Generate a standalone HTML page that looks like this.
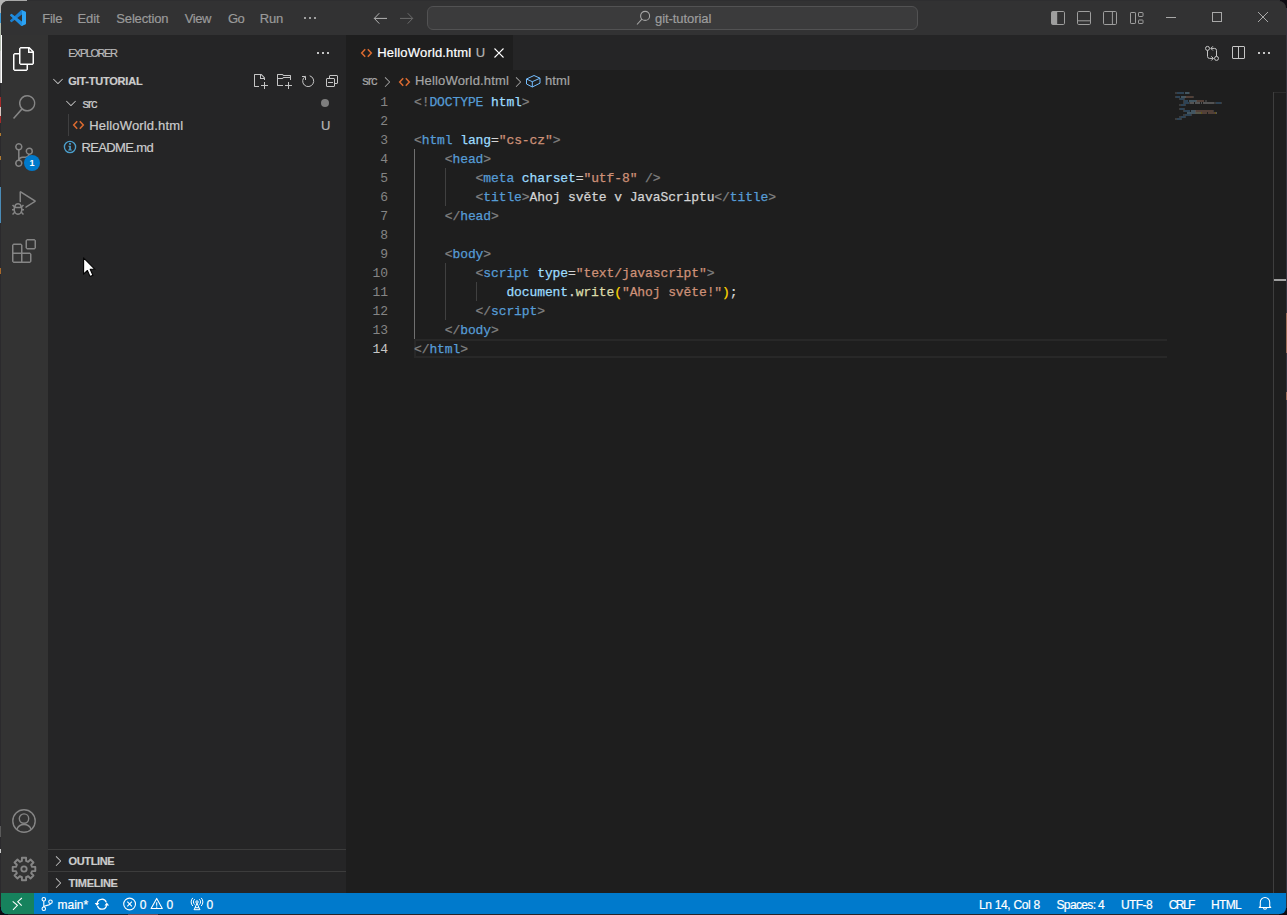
<!DOCTYPE html>
<html lang="en">
<head>
<meta charset="utf-8">
<title>HelloWorld.html - git-tutorial - Visual Studio Code</title>
<style>
*{box-sizing:border-box;margin:0;padding:0}
html,body{width:1287px;height:915px;overflow:hidden;background:#0e0b13;font-family:"Liberation Sans",sans-serif;}
#win{position:absolute;left:1px;top:1px;width:1285px;height:913px;background:#1e1e1e;border-radius:7px 7px 6px 6px;overflow:hidden;}
#abs{position:absolute;left:0;top:0;width:1287px;height:915px;}
.b{position:absolute;}
.t{position:absolute;white-space:pre;-webkit-text-stroke:0.2px;}
svg{position:absolute;overflow:visible}
#titlebar{left:0;top:0;width:1287px;height:35px;background:#323233;}
#cc{left:427px;top:6px;width:491px;height:24px;border-radius:6px;background:#3b3b3c;border:1px solid #525253;}
#act{left:0;top:35px;width:48px;height:858px;background:#333333;}
#side{left:48px;top:35px;width:298px;height:858px;background:#252526;}
#tabs{left:346px;top:35px;width:941px;height:35px;background:#252526;}
#tab{left:346px;top:35px;width:167px;height:35px;background:#1e1e1e;}
#status{left:0;top:893px;width:1287px;height:22px;background:#007acc;}
#remote{left:0;top:893px;width:34px;height:22px;background:#16825d;}
.hl{background:#3c3c3c;height:1px;}
.code{-webkit-text-stroke:0.25px;position:absolute;left:414px;font-family:"Liberation Mono",monospace;font-size:13px;line-height:19px;height:19px;letter-spacing:-0.101px;white-space:pre;color:#d4d4d4;}
.ln{position:absolute;left:346px;width:42px;text-align:right;font-family:"Liberation Mono",monospace;font-size:13px;line-height:19px;height:19px;letter-spacing:-0.101px;color:#858585;}
.g{color:#808080}.k{color:#569cd6}.a{color:#9cdcfe}.s{color:#ce9178}.f{color:#dcdcaa}.y{color:#ffd700}
#mm i{position:absolute;height:2px;opacity:.3}
.ig{position:absolute;width:1px;background:#404040;}
</style>
</head>
<body>
<div id="desk">
<div class="b" style="left:0;top:0;width:27px;height:1px;background:#a8a8a8"></div>
<div class="b" style="left:27px;top:0;width:1253px;height:1px;background:#2e2e30"></div>
<div class="b" style="left:0;top:0;width:8px;height:8px;background:#b4b4b4"></div>
<div class="b" style="left:0;top:8px;width:1px;height:899px;background:#2b2a2d"></div>
<div class="b" style="left:0;top:0;width:1px;height:13px;background:#b4b4b4"></div>
<div class="b" style="left:0;top:13px;width:1px;height:10px;background:#3a96d2"></div>
<div class="b" style="left:0;top:23px;width:1px;height:28px;background:#b4bdb0"></div>
<div class="b" style="left:0;top:51px;width:1px;height:32px;background:#c8c8c8"></div>
<div class="b" style="left:0;top:97px;width:1px;height:26px;background:#a52a2a"></div>
<div class="b" style="left:0;top:107px;width:1px;height:9px;background:#d9c9c4"></div>
<div class="b" style="left:0;top:133px;width:1px;height:3px;background:#b07a30"></div>
<div class="b" style="left:0;top:156px;width:1px;height:4px;background:#b07a30"></div>
<div class="b" style="left:0;top:187px;width:1px;height:36px;background:#4a8cb8"></div>
<div class="b" style="left:0;top:268px;width:1px;height:6px;background:#a8682a"></div>
<div class="b" style="left:0;top:826px;width:1px;height:11px;background:#5a5a5a"></div>
<div class="b" style="left:0;top:849px;width:1px;height:4px;background:#c8c8c8"></div>
<div class="b" style="left:1286px;top:8px;width:1px;height:900px;background:#36333e"></div>
<div class="b" style="left:1286px;top:313px;width:1px;height:40px;background:#9a6a58"></div>
<div class="b" style="left:1286px;top:392px;width:1px;height:8px;background:#9a6a58"></div>
<div class="b" style="left:8px;top:914px;width:1271px;height:1px;background:#2a2428"></div>
<div class="b" style="left:128px;top:914px;width:30px;height:1px;background:#7a4a50"></div>
</div>
<div id="win">
<div id="abs" style="left:-1px;top:-1px">
<!-- backgrounds -->
<div class="b" id="titlebar"></div>
<div class="b" id="cc"></div>
<div class="b" id="act"></div>
<div class="b" id="side"></div>
<div class="b" id="tabs"></div>
<div class="b" id="tab"></div>
<div class="b" id="status"></div>
<div class="b" id="remote"></div>
<!-- activity bar active indicator -->
<div class="b" style="left:1px;top:35px;width:1px;height:48px;background:#ffffff"></div>
<!-- sidebar section borders -->
<div class="b hl" style="left:48px;top:849px;width:298px;"></div>
<div class="b hl" style="left:48px;top:871px;width:298px;"></div>
<!-- tree indent guide -->
<div class="b" style="left:68px;top:114px;width:1px;height:22px;background:#3f3f40"></div>
<!-- tree dot -->
<div class="b" style="left:321px;top:99px;width:8px;height:8px;border-radius:50%;background:#7e7e7e"></div>

<!-- editor: current line -->
<div class="b" style="left:414px;top:339px;width:753px;height:19px;border:2px solid #282828;border-right:0;"></div>
<!-- indent guides -->
<div class="ig" style="left:414px;top:149px;height:190px;background:#707070"></div>
<div class="ig" style="left:445px;top:168px;height:38px;"></div>
<div class="ig" style="left:445px;top:263px;height:57px;"></div>
<div class="ig" style="left:476px;top:282px;height:19px;"></div>
<!-- overview ruler -->
<div class="b" style="left:1273px;top:92px;width:14px;height:1px;background:#2d2d2d"></div>
<div class="b" style="left:1273px;top:92px;width:1px;height:801px;background:#3e3e3e"></div>
<div class="b" style="left:1274px;top:279px;width:13px;height:2px;background:#a0a0a0"></div>

<div class="ln" style="top:93px;color:#858585">1</div>
<div class="code" style="top:93px"><span class="g">&lt;!</span><span class="k">DOCTYPE</span> <span class="a">html</span><span class="g">&gt;</span></div>
<div class="ln" style="top:112px;color:#858585">2</div>
<div class="ln" style="top:131px;color:#858585">3</div>
<div class="code" style="top:131px"><span class="g">&lt;</span><span class="k">html</span> <span class="a">lang</span>=<span class="s">"cs-cz"</span><span class="g">&gt;</span></div>
<div class="ln" style="top:150px;color:#858585">4</div>
<div class="code" style="top:150px">    <span class="g">&lt;</span><span class="k">head</span><span class="g">&gt;</span></div>
<div class="ln" style="top:169px;color:#858585">5</div>
<div class="code" style="top:169px">        <span class="g">&lt;</span><span class="k">meta</span> <span class="a">charset</span>=<span class="s">"utf-8"</span> <span class="g">/&gt;</span></div>
<div class="ln" style="top:188px;color:#858585">6</div>
<div class="code" style="top:188px">        <span class="g">&lt;</span><span class="k">title</span><span class="g">&gt;</span>Ahoj světe v JavaScriptu<span class="g">&lt;/</span><span class="k">title</span><span class="g">&gt;</span></div>
<div class="ln" style="top:207px;color:#858585">7</div>
<div class="code" style="top:207px">    <span class="g">&lt;/</span><span class="k">head</span><span class="g">&gt;</span></div>
<div class="ln" style="top:226px;color:#858585">8</div>
<div class="ln" style="top:245px;color:#858585">9</div>
<div class="code" style="top:245px">    <span class="g">&lt;</span><span class="k">body</span><span class="g">&gt;</span></div>
<div class="ln" style="top:264px;color:#858585">10</div>
<div class="code" style="top:264px">        <span class="g">&lt;</span><span class="k">script</span> <span class="a">type</span>=<span class="s">"text/javascript"</span><span class="g">&gt;</span></div>
<div class="ln" style="top:283px;color:#858585">11</div>
<div class="code" style="top:283px">            <span class="a">document</span>.<span class="f">write</span><span class="y">(</span><span class="s">"Ahoj světe!"</span><span class="y">)</span>;</div>
<div class="ln" style="top:302px;color:#858585">12</div>
<div class="code" style="top:302px">        <span class="g">&lt;/</span><span class="k">script</span><span class="g">&gt;</span></div>
<div class="ln" style="top:321px;color:#858585">13</div>
<div class="code" style="top:321px">    <span class="g">&lt;/</span><span class="k">body</span><span class="g">&gt;</span></div>
<div class="ln" style="top:340px;color:#c6c6c6">14</div>
<div class="code" style="top:340px"><span class="g">&lt;/</span><span class="k">html</span><span class="g">&gt;</span></div>
<div id="mm"><i style="left:1175px;top:92px;width:2px;background:#808080"></i><i style="left:1177px;top:92px;width:7px;background:#569cd6"></i><i style="left:1185px;top:92px;width:4px;background:#9cdcfe"></i><i style="left:1189px;top:92px;width:1px;background:#808080"></i><i style="left:1175px;top:96px;width:1px;background:#808080"></i><i style="left:1176px;top:96px;width:4px;background:#569cd6"></i><i style="left:1181px;top:96px;width:4px;background:#9cdcfe"></i><i style="left:1185px;top:96px;width:1px;background:#d4d4d4"></i><i style="left:1186px;top:96px;width:7px;background:#ce9178"></i><i style="left:1193px;top:96px;width:1px;background:#808080"></i><i style="left:1179px;top:98px;width:1px;background:#808080"></i><i style="left:1180px;top:98px;width:4px;background:#569cd6"></i><i style="left:1184px;top:98px;width:1px;background:#808080"></i><i style="left:1183px;top:100px;width:1px;background:#808080"></i><i style="left:1184px;top:100px;width:4px;background:#569cd6"></i><i style="left:1189px;top:100px;width:7px;background:#9cdcfe"></i><i style="left:1196px;top:100px;width:1px;background:#d4d4d4"></i><i style="left:1197px;top:100px;width:7px;background:#ce9178"></i><i style="left:1205px;top:100px;width:2px;background:#808080"></i><i style="left:1183px;top:102px;width:1px;background:#808080"></i><i style="left:1184px;top:102px;width:5px;background:#569cd6"></i><i style="left:1189px;top:102px;width:1px;background:#808080"></i><i style="left:1190px;top:102px;width:4px;background:#d4d4d4"></i><i style="left:1195px;top:102px;width:5px;background:#d4d4d4"></i><i style="left:1201px;top:102px;width:1px;background:#d4d4d4"></i><i style="left:1203px;top:102px;width:11px;background:#d4d4d4"></i><i style="left:1214px;top:102px;width:2px;background:#808080"></i><i style="left:1216px;top:102px;width:5px;background:#569cd6"></i><i style="left:1221px;top:102px;width:1px;background:#808080"></i><i style="left:1179px;top:104px;width:2px;background:#808080"></i><i style="left:1181px;top:104px;width:4px;background:#569cd6"></i><i style="left:1185px;top:104px;width:1px;background:#808080"></i><i style="left:1179px;top:108px;width:1px;background:#808080"></i><i style="left:1180px;top:108px;width:4px;background:#569cd6"></i><i style="left:1184px;top:108px;width:1px;background:#808080"></i><i style="left:1183px;top:110px;width:1px;background:#808080"></i><i style="left:1184px;top:110px;width:6px;background:#569cd6"></i><i style="left:1191px;top:110px;width:4px;background:#9cdcfe"></i><i style="left:1195px;top:110px;width:1px;background:#d4d4d4"></i><i style="left:1196px;top:110px;width:17px;background:#ce9178"></i><i style="left:1213px;top:110px;width:1px;background:#808080"></i><i style="left:1187px;top:112px;width:8px;background:#9cdcfe"></i><i style="left:1195px;top:112px;width:1px;background:#d4d4d4"></i><i style="left:1196px;top:112px;width:5px;background:#dcdcaa"></i><i style="left:1201px;top:112px;width:1px;background:#ffd700"></i><i style="left:1202px;top:112px;width:5px;background:#ce9178"></i><i style="left:1208px;top:112px;width:7px;background:#ce9178"></i><i style="left:1215px;top:112px;width:1px;background:#ffd700"></i><i style="left:1216px;top:112px;width:1px;background:#d4d4d4"></i><i style="left:1183px;top:114px;width:2px;background:#808080"></i><i style="left:1185px;top:114px;width:6px;background:#569cd6"></i><i style="left:1191px;top:114px;width:1px;background:#808080"></i><i style="left:1179px;top:116px;width:2px;background:#808080"></i><i style="left:1181px;top:116px;width:4px;background:#569cd6"></i><i style="left:1185px;top:116px;width:1px;background:#808080"></i><i style="left:1175px;top:118px;width:2px;background:#808080"></i><i style="left:1177px;top:118px;width:4px;background:#569cd6"></i><i style="left:1181px;top:118px;width:1px;background:#808080"></i></div>
<!-- VS Code logo -->
<svg style="left:10px;top:10px" width="16" height="16" viewBox="0 0 100 100">
<path fill="#1a7fd0" d="M96.5 10.8 75.9.9a6.2 6.2 0 0 0-7.1 1.2L1.3 63.6a4.2 4.2 0 0 0 0 6.2l5.5 5a4.2 4.2 0 0 0 5.3.2L93.3 13.4c2.7-2.1 6.7-.1 6.7 3.3v-.2a6.300 6.300 0 0 0-3.500-5.700z"/>
<path fill="#1f8ee2" d="M96.5 89.200 75.900 99.100a6.200 6.200 0 0 1-7.100-1.200L1.300 36.400a4.200 4.200 0 0 1 0-6.200l5.500-5a4.200 4.200 0 0 1 5.300-.2L93.300 86.600c2.700 2.100 6.700.1 6.700-3.300v.2a6.300 6.300 0 0 1-3.500 5.700z"/>
<path fill="#2ca3f4" d="M75.900 99.100a6.200 6.200 0 0 1-7.100-1.200c2.300 2.300 6.200.7 6.200-2.600V4.700c0-3.300-3.900-4.900-6.200-2.600A6.200 6.200 0 0 1 75.900.9l20.600 9.900a6.300 6.300 0 0 1 3.500 5.600v67.200a6.300 6.300 0 0 1-3.500 5.600L75.900 99.100z"/>
</svg>
<!-- activity: explorer (active) -->
<svg style="left:12px;top:47px" width="24" height="24" viewBox="0 0 24 24"><path fill="#ffffff" d="M17.500 0h-9L7 1.500V6H2.500L1 7.500v15.070L2.500 24h12.070L16 22.570V18h4.700l1.300-1.430V4.500L17.500 0zm0 2.120l2.380 2.380H17.500V2.120zm-3 20.380h-12v-15H7v9.070L8.500 18h6v4.500zm6-6h-12v-15H16V6h4.500v10.500z"/></svg>
<!-- search -->
<svg style="left:12px;top:95px" width="24" height="24" viewBox="0 0 24 24"><path fill="#858585" d="M15.250 0a8.250 8.250 0 0 0-6.180 13.720L1 22.880l1.120 1.120 8.050-9.120A8.251 8.251 0 1 0 15.250.010V0zm0 15a6.750 6.750 0 1 1 0-13.500 6.750 6.750 0 0 1 0 13.500z"/></svg>
<!-- source control -->
<svg style="left:12px;top:143px" width="24" height="24" viewBox="0 0 24 24"><path fill="#858585" d="M21.007 8.222A3.738 3.738 0 0 0 15.045 5.200a3.737 3.737 0 0 0 1.156 6.583 2.988 2.988 0 0 1-2.668 1.670h-2.990a4.456 4.456 0 0 0-2.989 1.165V7.400a3.737 3.737 0 1 0-1.494 0v9.117a3.776 3.776 0 1 0 1.816.099 2.990 2.990 0 0 1 2.668-1.667h2.990a4.484 4.484 0 0 0 4.223-3.039 3.736 3.736 0 0 0 3.250-3.687zM4.565 3.738a2.242 2.242 0 1 1 4.484 0 2.242 2.242 0 0 1-4.484 0zm4.484 16.441a2.242 2.242 0 1 1-4.484 0 2.242 2.242 0 0 1 4.484 0zm8.221-9.715a2.242 2.242 0 1 1 0-4.485 2.242 2.242 0 0 1 0 4.485z"/></svg>
<div class="b" style="left:24px;top:155px;width:16px;height:16px;border-radius:8px;background:#007acc;color:#fff;font-size:9px;font-weight:700;line-height:16px;text-align:center;">1</div>
<!-- debug -->
<svg style="left:12px;top:191px" width="24" height="24" viewBox="0 0 24 24"><path fill="#858585" d="M10.940 13.500l-1.320 1.320a3.730 3.730 0 0 0-7.240 0L1.060 13.500 0 14.560l1.720 1.720-.22.220V18H0v1.500h1.500v.080c.077.489.214.966.410 1.420L0 22.940 1.060 24l1.650-1.650A4.308 4.308 0 0 0 6 24a4.310 4.310 0 0 0 3.290-1.650L10.940 24 12 22.940 10.090 21c.198-.464.336-.951.410-1.450v-.100H12V18h-1.500v-1.500l-.220-.220L12 14.560l-1.060-1.060zM6 13.500a2.250 2.250 0 0 1 2.250 2.250h-4.500A2.250 2.250 0 0 1 6 13.500zm3 6a3.330 3.330 0 0 1-3 3 3.330 3.330 0 0 1-3-3v-2.250h6v2.250zm14.760-9.900v1.260L13.500 17.370V15.600l8.500-5.370L9 2v9.460a5.070 5.070 0 0 0-1.500-.720V.630L8.640 0l15.120 9.600z"/></svg>
<!-- extensions -->
<svg style="left:12px;top:239px" width="24" height="24" viewBox="0 0 24 24"><path fill="#858585" d="M13.500 1.500L15 0h7.500L24 1.500V9l-1.500 1.500H15L13.500 9V1.500zm1.500 0V9h7.500V1.500H15zM0 15V6l1.500-1.500H9L10.500 6v7.500H18l1.500 1.500v7.500L18 24H1.500L0 22.500V15zm9-1.500V6H1.500v7.500H9zM9 15H1.500v7.500H9V15zm1.500 7.500H18V15h-7.500v7.500z"/></svg>
<!-- title bar: menu ellipsis -->
<div class="b" style="left:304px;top:17px;width:2px;height:2px;background:#a0a0a0;box-shadow:5px 0 0 #a0a0a0,10px 0 0 #a0a0a0"></div>
<!-- nav arrows -->
<svg style="left:372px;top:10px" width="16" height="16" viewBox="0 0 16 16"><path fill="none" stroke="#b4b4b4" stroke-width="1" d="M7.300 3.200 2.300 8.400 7.300 13.600M2.300 8.400H15"/></svg>
<svg style="left:399px;top:10px" width="16" height="16" viewBox="0 0 16 16"><path fill="none" stroke="#6b6b6b" stroke-width="1" d="M8.700 3.200 13.700 8.400 8.700 13.600M13.700 8.400H1"/></svg>
<!-- command center search icon -->
<svg style="left:636px;top:10px" width="16" height="16" viewBox="0 0 16 16"><circle cx="9.100" cy="5.900" r="4.500" fill="none" stroke="#a6a6a6" stroke-width="1.100"/><path d="M5.900 9.200 1 14.500" stroke="#a6a6a6" stroke-width="1.100" fill="none"/></svg>
<!-- layout controls -->
<svg style="left:1050px;top:10px" width="16" height="16" viewBox="0 0 16 16"><rect x="1.500" y="1.500" width="13" height="13" rx="1.200" fill="none" stroke="#9e9e9e" stroke-width="1"/><path d="M1.500 2.500a1 1 0 0 1 1-1H7.200V14.500H2.500a1 1 0 0 1-1-1Z" fill="#9e9e9e"/></svg>
<svg style="left:1076px;top:10px" width="16" height="16" viewBox="0 0 16 16"><rect x="1.500" y="1.500" width="13" height="13" rx="1.200" fill="none" stroke="#9e9e9e" stroke-width="1"/><path d="M1.500 10.800H14.500" stroke="#9e9e9e" stroke-width="1"/></svg>
<svg style="left:1102px;top:10px" width="16" height="16" viewBox="0 0 16 16"><rect x="1.500" y="1.500" width="13" height="13" rx="1.200" fill="none" stroke="#9e9e9e" stroke-width="1"/><path d="M10.400 1.500V14.500" stroke="#9e9e9e" stroke-width="1"/></svg>
<svg style="left:1129px;top:10px" width="16" height="16" viewBox="0 0 16 16"><g fill="none" stroke="#9e9e9e" stroke-width="1"><rect x="1.500" y="2.500" width="5" height="11" rx=".6"/><rect x="9.500" y="2.500" width="4.500" height="4" rx=".6"/><rect x="9.500" y="10" width="4.500" height="3.500" rx=".6"/></g></svg>
<!-- window controls -->
<div class="b" style="left:1166px;top:17px;width:10px;height:1px;background:#a8a8a8"></div>
<div class="b" style="left:1212px;top:12px;width:10px;height:10px;border:1px solid #a8a8a8"></div>
<svg style="left:1258px;top:12px" width="10" height="10" viewBox="0 0 10 10"><path d="M0 0 10 10M10 0 0 10" stroke="#a8a8a8" stroke-width="1" fill="none"/></svg>

<!-- sidebar title ellipsis -->
<div class="b" style="left:317px;top:52px;width:2px;height:2px;background:#c5c5c5;box-shadow:5px 0 0 #c5c5c5,10px 0 0 #c5c5c5"></div>
<!-- section chevrons -->
<svg style="left:50px;top:73px" width="16" height="16" viewBox="0 0 16 16"><path fill="#c5c5c5" d="M7.976 10.072l4.357-4.357.620.618L8.284 11h-.618L3 6.333l.619-.618 4.357 4.357z"/></svg>
<svg style="left:63px;top:95px" width="16" height="16" viewBox="0 0 16 16"><path fill="#c5c5c5" d="M7.976 10.072l4.357-4.357.620.618L8.284 11h-.618L3 6.333l.619-.618 4.357 4.357z"/></svg>
<svg style="left:50px;top:853px" width="16" height="16" viewBox="0 0 16 16"><path fill="#c5c5c5" d="M10.072 8.024L5.715 3.667l.618-.620L11 7.716v.618L6.333 13l-.618-.619 4.357-4.357z"/></svg>
<svg style="left:50px;top:875px" width="16" height="16" viewBox="0 0 16 16"><path fill="#c5c5c5" d="M10.072 8.024L5.715 3.667l.618-.620L11 7.716v.618L6.333 13l-.618-.619 4.357-4.357z"/></svg>
<!-- section actions -->
<svg style="left:252px;top:73px" width="16" height="16" viewBox="0 0 16 16"><path fill="#c5c5c5" fill-rule="evenodd" d="M9.500 1.100l3.400 3.500.1.400v2h-1V6H8V2H3v11h4v1H2.500l-.5-.5v-12l.5-.5h6.700l.3.100zM9 2v3h2.900L9 2zm4 14h-1v-3H9v-1h3V9h1v3h3v1h-3v3z"/></svg>
<svg style="left:276px;top:73px" width="16" height="16" viewBox="0 0 16 16"><path fill="#c5c5c5" fill-rule="evenodd" d="M14.500 2H7.710l-.850-.850L6.510 1h-5l-.5.500v11l.5.500H7v-1H1.990V6h4.490l.350-.150.860-.860H14v1.500l-.001.510h1.011V2.500L14.500 2zm-.510 2h-6.500l-.350.150-.860.860H2v-3h4.290l.850.850.360.150H14l-.10.990zM13 16h-1v-3H9v-1h3V9h1v3h3v1h-3v3z"/></svg>
<svg style="left:300px;top:73px" width="16" height="16" viewBox="0 0 16 16"><path fill="none" stroke="#c5c5c5" stroke-width="1" d="M5.300 3.400A5.500 5.500 0 1 0 9.700 2.800M2 3.500H5.500V7"/></svg>
<svg style="left:324px;top:73px" width="16" height="16" viewBox="0 0 16 16"><path fill="#c5c5c5" fill-rule="evenodd" d="M9 9H4v1h5V9z M5 3l1-1h7l1 1v7l-1 1h-2v2l-1 1H3l-1-1V6l1-1h2V3zm1 2h4l1 1v4h2V3H6v2zm4 1H3v7h7V6z"/></svg>
<!-- file icons -->
<svg style="left:72px;top:119px" width="13" height="12" viewBox="0 0 13 12"><path fill="none" stroke="#da6a30" stroke-width="1.550" d="M5.200 2.200 1.700 6 5.200 9.800M7.800 2.200 11.300 6 7.800 9.800"/></svg>
<svg style="left:63px;top:140px" width="14" height="14" viewBox="0 0 14 14"><circle cx="7" cy="7" r="5.600" fill="none" stroke="#4b9ecb" stroke-width="1.350"/><path fill="#4b9ecb" d="M6.100 3.100h1.800v1.700H6.100zM5.400 5.700h2.500v3.900h.9v1H5.200v-1h1V6.700h-.8z"/></svg>
<!-- tab icons -->
<svg style="left:360px;top:47px" width="13" height="12" viewBox="0 0 13 12"><path fill="none" stroke="#da6a30" stroke-width="1.550" d="M5.200 2.200 1.700 6 5.200 9.800M7.800 2.200 11.300 6 7.800 9.800"/></svg>
<svg style="left:490px;top:44px" width="18" height="18" viewBox="0 0 16 16"><path fill="#ffffff" d="M8 8.707l3.646 3.647.708-.707L8.707 8l3.647-3.646-.707-.708L8 7.293 4.354 3.646l-.707.708L7.293 8l-3.646 3.646.707.708L8 8.707z"/></svg>
<!-- editor actions -->
<svg style="left:1204px;top:45px" width="16" height="16" viewBox="0 0 16 16"><g fill="none" stroke="#c5c5c5" stroke-width="1"><circle cx="3.500" cy="3.400" r="2"/><circle cx="12.500" cy="13.400" r="2"/><path d="M3.500 5.400V11.400a2 2 0 0 0 2 2H9.200M7.300 11.300 9.400 13.400 7.300 15.500"/><path d="M12.500 11.400V5.400a2 2 0 0 0-2-2H7M8.900 1.300 6.800 3.400 8.900 5.500"/></g></svg>
<svg style="left:1230px;top:45px" width="16" height="16" viewBox="0 0 16 16"><path fill="#c5c5c5" fill-rule="evenodd" d="M14 1H3L2 2v11l1 1h11l1-1V2l-1-1zM8 13H3V2h5v11zm6 0H9V2h5v11z"/></svg>
<div class="b" style="left:1258px;top:52px;width:2px;height:2px;background:#c5c5c5;box-shadow:5px 0 0 #c5c5c5,10px 0 0 #c5c5c5"></div>
<!-- breadcrumb icons -->
<svg style="left:379px;top:74px" width="16" height="16" viewBox="0 0 16 16"><path fill="#a5a5a5" d="M10.072 8.024L5.715 3.667l.618-.620L11 7.716v.618L6.333 13l-.618-.619 4.357-4.357z"/></svg>
<svg style="left:398px;top:75.500px" width="13" height="12" viewBox="0 0 13 12"><path fill="none" stroke="#da6a30" stroke-width="1.550" d="M5.200 2.200 1.700 6 5.200 9.800M7.800 2.200 11.300 6 7.800 9.800"/></svg>
<svg style="left:510px;top:74px" width="16" height="16" viewBox="0 0 16 16"><path fill="#a5a5a5" d="M10.072 8.024L5.715 3.667l.618-.620L11 7.716v.618L6.333 13l-.618-.619 4.357-4.357z"/></svg>
<svg style="left:525px;top:73px" width="16" height="16" viewBox="0 0 16 16"><path fill="none" stroke="#75beff" stroke-width="1" stroke-linejoin="round" d="M1.500 6 9 2.500 15 5.200V10.200L7.300 14 1.500 11V6L7.300 8.700 15 5.200M7.300 8.700V14"/></svg>

<!-- status bar icons -->
<svg style="left:9px;top:896px" width="16" height="16" viewBox="0 0 16 16"><path fill="none" stroke="#ffffff" stroke-width="1.050" d="M3.700 5.300 8.400 9.300 4 13.800M12.900 2 8.700 5.700 12.700 9.700"/></svg>
<svg style="left:39px;top:896px" width="16" height="16" viewBox="0 0 16 16"><g fill="none" stroke="#ffffff" stroke-width="1.100"><circle cx="4.800" cy="3.300" r="1.750"/><circle cx="4.800" cy="12.800" r="1.750"/><circle cx="11.500" cy="5.700" r="1.750"/><path d="M4.800 5.050V11.050M11.500 7.450C11.500 10 4.800 8.700 4.800 11.050"/></g></svg>
<svg style="left:94px;top:896px" width="16" height="16" viewBox="0 0 16 16"><g fill="none" stroke="#ffffff" stroke-width="1.250"><path d="M3.200 7.300A4.700 4.700 0 0 1 12.300 6.400M12.600 9.100A4.700 4.700 0 0 1 3.500 10"/></g><path fill="#ffffff" d="M.700 6.900H5.300L3 9.900ZM10.500 9.500H15.100L12.800 6.500Z"/></svg>
<svg style="left:122px;top:896px" width="16" height="16" viewBox="0 0 16 16"><g fill="none" stroke="#ffffff" stroke-width="1.100"><circle cx="7.600" cy="8" r="5.900"/><path d="M5.300 5.700 9.900 10.300M9.900 5.700 5.300 10.300"/></g></svg>
<svg style="left:149px;top:896px" width="16" height="16" viewBox="0 0 16 16"><g fill="none" stroke="#ffffff" stroke-width="1.100" stroke-linejoin="round"><path d="M7.700 2.400 13.300 12.500H2.100Z"/><path d="M7.700 6.300V9.800M7.700 10.600V11.700"/></g></svg>
<svg style="left:189px;top:896px" width="16" height="16" viewBox="0 0 16 16"><g fill="none" stroke="#ffffff" stroke-width="1"><circle cx="8" cy="6" r="1.200"/><path d="M8 7.200 5 14M8 7.200 11 14M6 11.700H10M5.200 13.700H10.800"/><path d="M5.700 8.600A3.500 3.500 0 0 1 5.700 3.200M10.300 8.600A3.500 3.500 0 0 0 10.300 3.200M3.800 10A5.800 5.800 0 0 1 3.800 1.900M12.200 10A5.800 5.800 0 0 0 12.200 1.900"/></g></svg>
<svg style="left:1257px;top:895.300px" width="16" height="16" viewBox="0 0 16 16"><g fill="none" stroke="#ffffff" stroke-width="1.100" stroke-linejoin="round"><path d="M3.300 11.500V7.200a4.700 4.700 0 0 1 9.400 0V11.500L13.700 12.500H2.300Z"/><path d="M6.500 12.800a1.500 1.500 0 0 0 3 0"/></g></svg>

<!-- accounts -->
<svg style="left:12px;top:809px" width="24" height="24" viewBox="0 0 24 24"><g fill="none" stroke="#858585" stroke-width="1.400"><circle cx="12" cy="12" r="11.200"/><circle cx="12" cy="9.600" r="4.700"/><path d="M4.800 20.400a7.700 7.700 0 0 1 14.400 0"/></g></svg>
<!-- gear -->
<svg id="gear" style="left:12px;top:857px" width="24" height="24" viewBox="0 0 24 24"><path d="M9.92 3.96 L9.90 0.69 L14.10 0.69 L14.08 3.96 L16.21 4.85 L18.51 2.52 L21.48 5.49 L19.15 7.79 L20.04 9.92 L23.31 9.90 L23.31 14.10 L20.04 14.08 L19.15 16.21 L21.48 18.51 L18.51 21.48 L16.21 19.15 L14.08 20.04 L14.10 23.31 L9.90 23.31 L9.92 20.04 L7.79 19.15 L5.49 21.48 L2.52 18.51 L4.85 16.21 L3.96 14.08 L0.69 14.10 L0.69 9.90 L3.96 9.92 L4.85 7.79 L2.52 5.49 L5.49 2.52 L7.79 4.85Z" fill="none" stroke="#858585" stroke-width="1.900" stroke-linejoin="round"/><circle cx="12" cy="12" r="2.700" fill="none" stroke="#858585" stroke-width="1.800"/></svg>

<!-- mouse cursor -->
<svg style="left:83px;top:257px" width="14" height="21" viewBox="0 0 14 21"><path fill="#ffffff" stroke="#000000" stroke-width="1.100" stroke-linejoin="round" d="M.600.800V17.200L4.400 13.500 7 19.400 9.900 18.200 7.200 12.300H12Z"/></svg>

<span class="t" style="left:42.20px;top:10.50px;font-size:13px;line-height:16px;color:#9a9a9a;letter-spacing:-0.206px;">File</span>
<span class="t" style="left:77.50px;top:10.50px;font-size:13px;line-height:16px;color:#9a9a9a;letter-spacing:-0.063px;">Edit</span>
<span class="t" style="left:116.30px;top:10.50px;font-size:13px;line-height:16px;color:#9a9a9a;letter-spacing:-0.156px;">Selection</span>
<span class="t" style="left:184.70px;top:10.50px;font-size:13px;line-height:16px;color:#9a9a9a;letter-spacing:-0.418px;">View</span>
<span class="t" style="left:228.00px;top:10.50px;font-size:13px;line-height:16px;color:#9a9a9a;letter-spacing:-0.712px;">Go</span>
<span class="t" style="left:259.80px;top:10.50px;font-size:13px;line-height:16px;color:#9a9a9a;letter-spacing:-0.209px;">Run</span>
<span class="t" style="left:655.00px;top:10.50px;font-size:13px;line-height:16px;color:#9d9d9d;letter-spacing:-0.063px;">git-tutorial</span>
<span class="t" style="left:68.20px;top:46.69px;font-size:11px;line-height:13px;color:#bbbbbb;letter-spacing:-1.466px;">EXPLORER</span>
<span class="t" style="left:68.20px;top:74.69px;font-size:11px;line-height:13px;color:#cccccc;letter-spacing:-0.216px;font-weight:700;">GIT-TUTORIAL</span>
<span class="t" style="left:82.40px;top:95.50px;font-size:13px;line-height:16px;color:#cccccc;letter-spacing:-1.115px;">src</span>
<span class="t" style="left:89.30px;top:117.50px;font-size:13px;line-height:16px;color:#cccccc;letter-spacing:0.163px;">HelloWorld.html</span>
<span class="t" style="left:321.00px;top:117.50px;font-size:13px;line-height:16px;color:#b8b8b8;letter-spacing:0.000px;">U</span>
<span class="t" style="left:81.40px;top:139.50px;font-size:13px;line-height:16px;color:#cccccc;letter-spacing:-0.632px;">README.md</span>
<span class="t" style="left:68.50px;top:854.69px;font-size:11px;line-height:13px;color:#cccccc;letter-spacing:-0.356px;font-weight:700;">OUTLINE</span>
<span class="t" style="left:68.50px;top:876.69px;font-size:11px;line-height:13px;color:#cccccc;letter-spacing:-0.271px;font-weight:700;">TIMELINE</span>
<span class="t" style="left:377.30px;top:45.00px;font-size:13px;line-height:16px;color:#ffffff;letter-spacing:0.170px;">HelloWorld.html</span>
<span class="t" style="left:475.80px;top:45.00px;font-size:13px;line-height:16px;color:#b4b4b4;letter-spacing:0.000px;">U</span>
<span class="t" style="left:362.20px;top:73.00px;font-size:13px;line-height:16px;color:#a5a5a5;letter-spacing:-1.015px;">src</span>
<span class="t" style="left:415.00px;top:73.00px;font-size:13px;line-height:16px;color:#a5a5a5;letter-spacing:0.170px;">HelloWorld.html</span>
<span class="t" style="left:545.00px;top:73.00px;font-size:13px;line-height:16px;color:#a5a5a5;letter-spacing:0.110px;">html</span>
<span class="t" style="left:57.50px;top:897.84px;font-size:12px;line-height:14px;color:#ffffff;letter-spacing:-0.002px;">main*</span>
<span class="t" style="left:139.70px;top:897.84px;font-size:12px;line-height:14px;color:#ffffff;letter-spacing:0.000px;">0</span>
<span class="t" style="left:166.40px;top:897.84px;font-size:12px;line-height:14px;color:#ffffff;letter-spacing:0.000px;">0</span>
<span class="t" style="left:206.50px;top:897.84px;font-size:12px;line-height:14px;color:#ffffff;letter-spacing:0.000px;">0</span>
<span class="t" style="left:979.00px;top:897.84px;font-size:12px;line-height:14px;color:#ffffff;letter-spacing:-0.331px;">Ln 14, Col 8</span>
<span class="t" style="left:1056.50px;top:897.84px;font-size:12px;line-height:14px;color:#ffffff;letter-spacing:-0.649px;">Spaces: 4</span>
<span class="t" style="left:1121.00px;top:897.84px;font-size:12px;line-height:14px;color:#ffffff;letter-spacing:-0.581px;">UTF-8</span>
<span class="t" style="left:1168.70px;top:897.84px;font-size:12px;line-height:14px;color:#ffffff;letter-spacing:-1.569px;">CRLF</span>
<span class="t" style="left:1211.00px;top:897.84px;font-size:12px;line-height:14px;color:#ffffff;letter-spacing:-0.664px;">HTML</span>
</div>
</div>
</body>
</html>
